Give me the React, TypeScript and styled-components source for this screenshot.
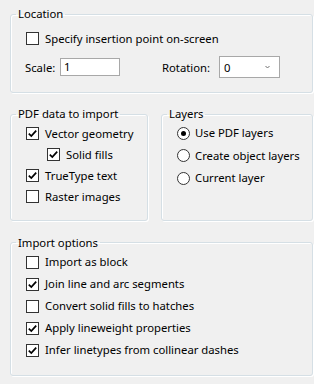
import styled, { createGlobalStyle } from "styled-components";

const Global = createGlobalStyle`
  html, body {
    margin: 0;
    padding: 0;
    background: #f0f0f0;
  }
  body {
    font-family: "Noto Sans", "Open Sans", sans-serif;
    font-size: 11.3px;
    color: #000000;
  }
`;

const Page = styled.div`
  width: 314px;
  height: 384px;
  box-sizing: border-box;
  padding: 6px 1px 0 10px;
  display: flex;
  flex-direction: column;
`;

const Group = styled.fieldset<{ $w?: number; $mt?: number }>`
  margin: ${({ $mt }) => $mt ?? 0}px 0 0 0;
  padding: 0;
  min-width: 0;
  width: ${({ $w }) => ($w ? `${$w}px` : "auto")};
  box-sizing: border-box;
  border: 1px solid #d5dfe5;
  border-radius: 3px;
  box-shadow: inset 1px 1px 0 #ffffff, 1px 1px 0 #ffffff;
`;

const Legend = styled.legend`
  margin-left: 5px;
  padding: 0 2px;
  line-height: 16px;
`;

const Body = styled.div<{ $pt: number; $pb: number }>`
  padding: ${({ $pt }) => $pt}px 0 ${({ $pb }) => $pb}px 15px;
  display: flex;
  flex-direction: column;
`;

const Row = styled.div<{ $h: number; $indent?: number }>`
  height: ${({ $h }) => $h}px;
  display: flex;
  align-items: center;
  padding-left: ${({ $indent }) => $indent ?? 0}px;
  white-space: nowrap;
`;

const Box = styled.span`
  width: 13px;
  height: 13px;
  box-sizing: border-box;
  border: 1px solid #333333;
  background: #ffffff;
  margin-right: 6px;
  flex: none;
  display: flex;
  align-items: center;
  justify-content: center;
`;

const Round = styled.span`
  width: 13px;
  height: 13px;
  box-sizing: border-box;
  border: 1px solid #333333;
  border-radius: 50%;
  background: #ffffff;
  margin-right: 5px;
  flex: none;
  display: flex;
  align-items: center;
  justify-content: center;
`;

const Dot = styled.span`
  width: 5px;
  height: 5px;
  border-radius: 50%;
  background: #000000;
`;

const Label = styled.span`
  line-height: 16px;
`;

const FieldRow = styled.div`
  height: 22px;
  margin-top: 7px;
  display: flex;
  align-items: center;
  margin-left: -1px;
`;

const FieldLabel = styled.span<{ $w: number }>`
  width: ${({ $w }) => $w}px;
  flex: none;
`;

const TextBox = styled.div`
  width: 60px;
  height: 18px;
  box-sizing: border-box;
  border: 1px solid #a8a8a8;
  background: #ffffff;
  padding-left: 3px;
  line-height: 16px;
  flex: none;
`;

const Select = styled.div`
  width: 61px;
  height: 22px;
  box-sizing: border-box;
  border: 1px solid #a8a8a8;
  background: #ffffff;
  padding: 0 9px 0 4px;
  display: flex;
  align-items: center;
  justify-content: space-between;
  flex: none;
`;

const Gap = styled.span<{ $w: number }>`
  width: ${({ $w }) => $w}px;
  flex: none;
`;

const Pair = styled.div`
  display: flex;
  gap: 13px;
  margin-top: 13px;
`;

function Check({ on, text, indent, h = 21 }: { on: boolean; text: string; indent?: number; h?: number }) {
  return (
    <Row $h={h} $indent={indent}>
      <Box>
        {on && (
          <svg width="11" height="11" viewBox="0 0 11 11">
            <path d="M1.8 5.6 L4.3 8.1 L9.2 2.6" fill="none" stroke="#000" strokeWidth="1.7" />
          </svg>
        )}
      </Box>
      <Label>{text}</Label>
    </Row>
  );
}

function Radio({ on, text }: { on: boolean; text: string }) {
  return (
    <Row $h={22.5}>
      <Round>{on && <Dot />}</Round>
      <Label>{text}</Label>
    </Row>
  );
}

export default function App() {
  return (
    <>
      <Global />
      <Page>
        <Group>
          <Legend>Location</Legend>
          <Body $pt={6} $pb={14}>
            <Check on={false} text="Specify insertion point on-screen" />
            <FieldRow>
              <FieldLabel $w={35}>Scale:</FieldLabel>
              <TextBox>1</TextBox>
              <Gap $w={42} />
              <FieldLabel $w={57}>Rotation:</FieldLabel>
              <Select>
                <span>0</span>
                <svg width="5" height="4" viewBox="0 0 5 4">
                  <path d="M0.5 1 L2.5 3 L4.5 1" fill="none" stroke="#707070" strokeWidth="1" />
                </svg>
              </Select>
            </FieldRow>
          </Body>
        </Group>
        <Pair>
          <Group $w={138}>
            <Legend>PDF data to import</Legend>
            <Body $pt={1} $pb={8}>
              <Check on text="Vector geometry" />
              <Check on text="Solid fills" indent={21} />
              <Check on text="TrueType text" />
              <Check on={false} text="Raster images" />
            </Body>
          </Group>
          <Group $w={152}>
            <Legend>Layers</Legend>
            <Body $pt={0} $pb={30}>
              <Radio on text="Use PDF layers" />
              <Radio on={false} text="Create object layers" />
              <Radio on={false} text="Current layer" />
            </Body>
          </Group>
        </Pair>
        <Group $mt={14}>
          <Legend>Import options</Legend>
          <Body $pt={0.5} $pb={14}>
            <Check h={22} on={false} text="Import as block" />
            <Check h={22} on text="Join line and arc segments" />
            <Check h={22} on={false} text="Convert solid fills to hatches" />
            <Check h={22} on text="Apply lineweight properties" />
            <Check h={22} on text="Infer linetypes from collinear dashes" />
          </Body>
        </Group>
      </Page>
    </>
  );
}
